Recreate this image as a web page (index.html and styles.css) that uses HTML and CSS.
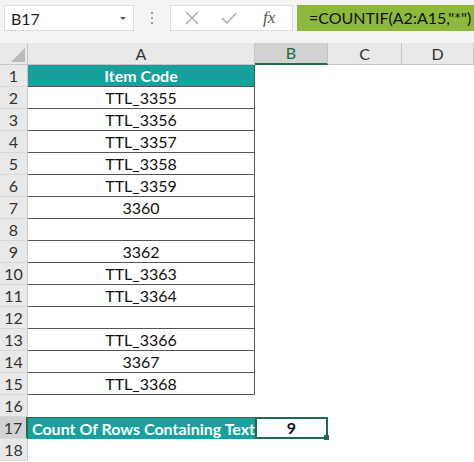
FILE: index.html
```html
<!DOCTYPE html>
<html lang="en">
<head>
    <meta charset="UTF-8">
    <title>COUNTIF text rows</title>
    <link rel="stylesheet" href="styles.css">
</head>
<body>

<div class="formula-bar">
    <div class="name-box">
        <span>B17</span>
        <span class="caret"></span>
    </div>
    <div class="grip">
        <i></i><i></i><i></i>
    </div>
    <div class="fx-buttons">
        <svg class="btn-icon" width="14" height="14" viewBox="0 0 14 14"><path d="M1 1 L13 13 M13 1 L1 13" stroke="#a8a8a8" stroke-width="1.4" fill="none"/></svg>
        <svg class="btn-icon" width="16" height="14" viewBox="0 0 16 14"><path d="M1 7 L6 12 L15 2" stroke="#a8a8a8" stroke-width="1.4" fill="none"/></svg>
        <span class="fx">fx</span>
    </div>
    <div class="formula">=COUNTIF(A2:A15,"*")</div>
</div>

<div class="sheet" id="sheet">
    <div class="corner"><span></span></div>
    <div class="col-head">A</div>
    <div class="col-head active">B</div>
    <div class="col-head">C</div>
    <div class="col-head">D</div>
</div>

<script>
    const values = ['TTL_3355', 'TTL_3356', 'TTL_3357', 'TTL_3358', 'TTL_3359', '3360', '',
        '3362', 'TTL_3363', 'TTL_3364', '', 'TTL_3366', '3367', 'TTL_3368'];
    const sheet = document.getElementById('sheet');

    function cell(cls, text) {
        const d = document.createElement('div');
        d.className = cls;
        d.textContent = text || '';
        sheet.appendChild(d);
    }

    for (let r = 1; r <= 18; r++) {
        cell(r === 17 ? 'row-head active' : 'row-head', r);
        if (r === 1) {
            cell('cell table head', 'Item Code');
            cell('cell'); cell('cell'); cell('cell');
        } else if (r <= 15) {
            cell('cell table', values[r - 2]);
            cell('cell'); cell('cell'); cell('cell');
        } else if (r === 17) {
            cell('cell label', 'Count Of Rows Containing Text');
            cell('cell result', '9');
            cell('cell'); cell('cell');
        } else {
            cell('cell'); cell('cell'); cell('cell'); cell('cell');
        }
    }
</script>
</body>
</html>
```

FILE: styles.css
```css
body {
    margin: 0;
    width: 474px;
    height: 462px;
    overflow: hidden;
    background: #ffffff;
    font-family: Lato, "Liberation Sans", sans-serif;
}

.formula-bar {
    height: 43px;
    background: #f3f3f3;
    display: flex;
    align-items: flex-start;
    padding-top: 5px;
    box-sizing: border-box;
}

.name-box {
    width: 130px;
    height: 26px;
    margin-left: 4px;
    background: #ffffff;
    border: 1px solid #dcdcdc;
    box-sizing: border-box;
    display: flex;
    align-items: center;
    justify-content: space-between;
    padding: 0 7px 0 6px;
    font-size: 16px;
    color: #222222;
}

.caret {
    width: 0;
    height: 0;
    border-left: 3px solid transparent;
    border-right: 3px solid transparent;
    border-top: 3px solid #555555;
}

.grip {
    width: 36px;
    height: 26px;
    display: flex;
    flex-direction: column;
    align-items: center;
    justify-content: center;
    gap: 3px;
}

.grip i {
    width: 2px;
    height: 2px;
    background: #9a9a9a;
}

.fx-buttons {
    width: 123px;
    height: 26px;
    background: #ffffff;
    border: 1px solid #dcdcdc;
    box-sizing: border-box;
    display: flex;
    align-items: center;
    padding-left: 14px;
    gap: 22px;
}

.fx {
    font-family: "Liberation Serif", serif;
    font-style: italic;
    font-size: 17px;
    color: #555555;
    margin-left: 4px;
}

.formula {
    flex: 1;
    height: 26px;
    margin-left: 4px;
    background: #8db83c;
    color: #111111;
    font-size: 16px;
    line-height: 26px;
    padding-left: 12px;
    white-space: nowrap;
    overflow: hidden;
}

.sheet {
    display: grid;
    grid-template-columns: 28px 227px 73px 74px 72px;
    grid-template-rows: 22px;
    grid-auto-rows: 22px;
}

.corner {
    background: #e9e9e9;
    border-right: 1px solid #c6c6c6;
    border-bottom: 1px solid #c6c6c6;
    position: relative;
}

.corner span {
    position: absolute;
    right: 2px;
    bottom: 2px;
    width: 0;
    height: 0;
    border-left: 14px solid transparent;
    border-bottom: 14px solid #b9b9b9;
}

.col-head {
    background: #e9e9e9;
    border-right: 1px solid #c6c6c6;
    border-bottom: 1px solid #c6c6c6;
    text-align: center;
    font-size: 16px;
    line-height: 21px;
    color: #333333;
}

.col-head.active {
    background: #d2d2d2;
    color: #1e6e42;
    border-bottom: 2px solid #1e7145;
    line-height: 20px;
}

.row-head {
    background: #e9e9e9;
    border-right: 1px solid #c6c6c6;
    border-bottom: 1px solid #d8d8d8;
    text-align: center;
    font-size: 16px;
    line-height: 21px;
    color: #333333;
}

.row-head.active {
    background: #d2d2d2;
    border-right: 2px solid #1e7145;
}

.cell {
    font-size: 16px;
    line-height: 21px;
    text-align: center;
    color: #111111;
    white-space: nowrap;
    overflow: hidden;
}

.cell.table {
    border-right: 1px solid #555555;
    border-bottom: 1px solid #555555;
}

.cell.head {
    background: #17a19c;
    color: #ffffff;
    font-weight: bold;
}

.cell.label {
    background: #17a19c;
    color: #ffffff;
    font-weight: bold;
    text-align: left;
    padding-left: 4px;
    border-top: 1px solid #555555;
}

.cell.result {
    border: 2px solid #1d6b4f;
    font-weight: bold;
    line-height: 18px;
    position: relative;
    overflow: visible;
}

.cell.result::after {
    content: "";
    position: absolute;
    right: -3px;
    bottom: -3px;
    width: 5px;
    height: 5px;
    background: #1d6b4f;
}
```
